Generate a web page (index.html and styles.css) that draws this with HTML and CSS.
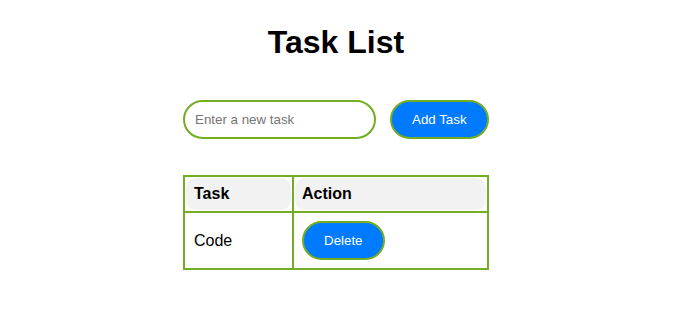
FILE: index.html
```html
<!DOCTYPE html>
<html lang="en">

<head>
    <meta charset="UTF-8">
    <meta name="viewport" content="width=device-width, initial-scale=1.0">
    <title>Task List</title>
    <link rel="stylesheet" href="styles.css">
</head>

<body>
    <div class="container">
        <h1>Task List</h1>

        <div class="task-form">
            <input type="text" id="task-input" placeholder="Enter a new task">
            <button class="btn">Add Task</button>
        </div>

        <table class="task-table">
            <thead>
                <tr>
                    <th class="col-task"><div class="th-inner">Task</div></th>
                    <th><div class="th-inner">Action</div></th>
                </tr>
            </thead>
            <tbody>
                <tr>
                    <td class="col-task">Code</td>
                    <td><button class="btn">Delete</button></td>
                </tr>
            </tbody>
        </table>
    </div>
</body>

</html>
```

FILE: styles.css
```css
/* simple task list */
body {
    font-family: "Liberation Sans", Arial, sans-serif;
    margin: 0 8px 0 0;
    background-color: #ffffff;
    color: #000000;
}

.container {
    width: 306px;
    margin: 0 auto;
}

h1 {
    font-size: 32px;
    text-align: center;
    margin: 24px 0 0;
}

.task-form {
    display: flex;
    gap: 14px;
    margin-top: 39px;
}

.task-form input {
    width: 169px;
    padding: 10px;
    border: 2px solid #73ad21;
    border-radius: 20px;
    font-family: "Liberation Sans", Arial, sans-serif;
    font-size: 13.333px;
    outline: none;
}

.btn {
    flex-shrink: 0;
    white-space: nowrap;
    padding: 10px 20px;
    border: 2px solid #73ad21;
    border-radius: 20px;
    background-color: #007bff;
    color: #ffffff;
    font-family: "Liberation Sans", Arial, sans-serif;
    font-size: 13.333px;
    cursor: pointer;
}

.task-table {
    width: 306px;
    margin-top: 36px;
    border-collapse: collapse;
    border: 2px solid #73ad21;
}

.task-table th,
.task-table td {
    border: 2px solid #73ad21;
    padding: 8px;
    text-align: left;
    font-size: 16px;
}

.task-table th {
    padding: 1px;
}

.th-inner {
    background-color: #f2f2f2;
    border-radius: 10px;
    padding: 7px;
}

.task-table .col-task {
    width: 90px;
    padding-left: 9px;
}

.task-table th.col-task {
    padding-left: 1px;
}

.col-task .th-inner {
    padding-left: 8px;
}
```
